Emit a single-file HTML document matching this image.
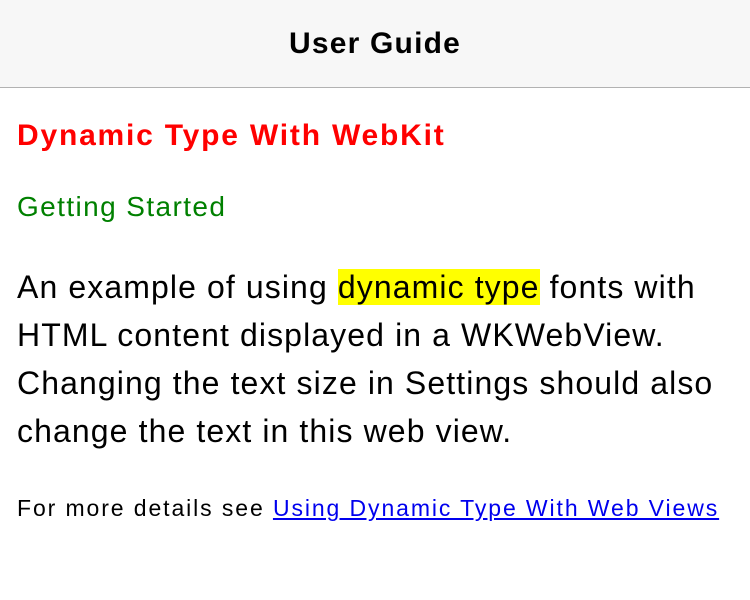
<!DOCTYPE html>
<html><head><meta charset="utf-8"><style>
html,body{margin:0;padding:0;background:#fff;width:750px;height:600px;overflow:hidden;font-family:"Liberation Sans",sans-serif;}
.nav{height:88px;background:#f7f7f7;border-bottom:1px solid #b2b2b2;box-sizing:border-box;text-align:center;font-weight:bold;font-size:30px;line-height:88px;color:#000;letter-spacing:1.2px;}
h1{color:#f00;font-size:30px;font-weight:bold;margin:0;position:absolute;top:116px;left:17px;line-height:40px;letter-spacing:1.8px;white-space:nowrap;}
h2{color:#008000;font-size:28px;font-weight:normal;margin:0;position:absolute;top:187px;left:17px;line-height:40px;letter-spacing:1.4px;white-space:nowrap;}
p.m{position:absolute;top:263px;left:17px;width:740px;margin:0;font-size:32px;line-height:48px;color:#000;letter-spacing:1.1px;white-space:nowrap;}
.hl{background:#ff0;}
p.s{position:absolute;top:492px;left:17px;margin:0;font-size:23px;line-height:32px;color:#000;letter-spacing:1.9px;white-space:nowrap;}
a{color:#00e;text-decoration:underline;}
</style></head><body>
<div class="nav">User Guide</div>
<h1>Dynamic Type With WebKit</h1>
<h2>Getting Started</h2>
<p class="m">An example of using <span class="hl">dynamic type</span> fonts with<br>HTML content displayed in a WKWebView.<br>Changing the text size in Settings should also<br>change the text in this web view.</p>
<p class="s">For more details see <a>Using Dynamic Type With Web Views</a></p>
</body></html>
